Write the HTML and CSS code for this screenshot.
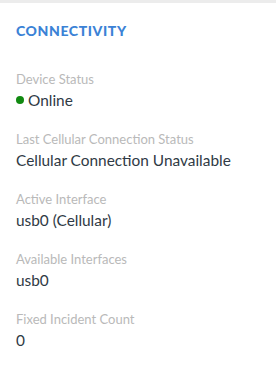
FILE: index.html
```html
<!DOCTYPE html>
<html lang="en">
<head>
    <meta charset="UTF-8">
    <meta name="viewport" content="width=device-width, initial-scale=1.0">
    <title>Connectivity</title>
    <link rel="stylesheet" href="styles.css">
</head>
<body>
    <div class="panel">
        <h2 class="panel-title">CONNECTIVITY</h2>
        <div class="field">
            <div class="label">Device Status</div>
            <div class="value"><span class="dot"></span>Online</div>
        </div>
        <div class="field">
            <div class="label">Last Cellular Connection Status</div>
            <div class="value">Cellular Connection Unavailable</div>
        </div>
        <div class="field">
            <div class="label">Active Interface</div>
            <div class="value">usb0 (Cellular)</div>
        </div>
        <div class="field">
            <div class="label">Available Interfaces</div>
            <div class="value">usb0</div>
        </div>
        <div class="field">
            <div class="label">Fixed Incident Count</div>
            <div class="value">0</div>
        </div>
    </div>
</body>
</html>
```

FILE: styles.css
```css
body {
    margin: 0;
    font-family: Lato, "Noto Sans", sans-serif;
    background-color: #fff;
    color: #2f3a45;
}

.panel {
    border-top: 3px solid #ececec;
    padding: 18px 16px 16px;
}

.panel-title {
    margin: 0 0 29px;
    font-size: 14px;
    line-height: 20px;
    font-weight: 900;
    letter-spacing: 0.6px;
    color: #3b82d6;
}

.field {
    margin-bottom: 20px;
}

.label {
    font-size: 13px;
    line-height: 18px;
    color: #b9b9b9;
}

.value {
    margin-top: 2px;
    font-size: 15.4px;
    line-height: 20px;
    display: flex;
    align-items: center;
}

.dot {
    width: 8px;
    height: 8px;
    border-radius: 50%;
    background-color: #118a11;
    margin-right: 4px;
}
```
